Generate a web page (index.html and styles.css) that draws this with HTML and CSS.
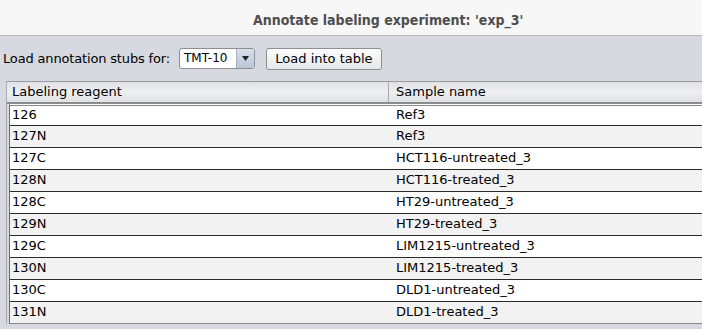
FILE: index.html
```html
<!DOCTYPE html>
<html>
<head>
<meta charset="utf-8">
<link rel="stylesheet" href="styles.css">
</head>
<body>
<div class="titlebar"><span class="title">Annotate labeling experiment: 'exp_3'</span></div>
<div class="content">
  <div class="toolbar">
    <span class="label">Load annotation stubs for:</span>
    <div class="combo"><span class="combo-text">TMT-10</span><span class="combo-arrow"><svg width="7" height="5" viewBox="0 0 7 5"><path d="M0 0H7L3.5 5Z" fill="#222"/></svg></span></div>
    <div class="button">Load into table</div>
  </div>
  <div class="pane">
    <div class="header">
      <div class="hcell c1">Labeling reagent</div>
      <div class="hcell c2">Sample name</div>
    </div>
    <div class="rows">
      <div class="row first"><div class="cell c1">126</div><div class="cell c2">Ref3</div></div>
      <div class="row alt"><div class="cell c1">127N</div><div class="cell c2">Ref3</div></div>
      <div class="row"><div class="cell c1">127C</div><div class="cell c2">HCT116-untreated_3</div></div>
      <div class="row alt"><div class="cell c1">128N</div><div class="cell c2">HCT116-treated_3</div></div>
      <div class="row"><div class="cell c1">128C</div><div class="cell c2">HT29-untreated_3</div></div>
      <div class="row alt"><div class="cell c1">129N</div><div class="cell c2">HT29-treated_3</div></div>
      <div class="row"><div class="cell c1">129C</div><div class="cell c2">LIM1215-untreated_3</div></div>
      <div class="row alt"><div class="cell c1">130N</div><div class="cell c2">LIM1215-treated_3</div></div>
      <div class="row"><div class="cell c1">130C</div><div class="cell c2">DLD1-untreated_3</div></div>
      <div class="row alt last"><div class="cell c1">131N</div><div class="cell c2">DLD1-treated_3</div></div>
    </div>
  </div>
</div>
</body>
</html>
```
FILE: styles.css
```css
html, body {
  margin: 0;
  padding: 0;
}
body {
  width: 702px;
  height: 329px;
  overflow: hidden;
  background: #d6d9df;
  font-family: "DejaVu Sans", sans-serif;
  font-size: 12px;
  color: #000;
}
.titlebar {
  height: 35px;
  background: #f7f7f7;
  border-bottom: 1px solid #b9b9b9;
  display: flex;
  align-items: center;
  padding-left: 253px;
  box-sizing: content-box;
}
.title {
  font-family: "DejaVu Sans Condensed", "DejaVu Sans", sans-serif;
  font-weight: bold;
  font-size: 14px;
  color: #4e4e4e;
  padding-top: 4px;
}
.content {
  padding: 0 0 0 6px;
}
.toolbar {
  height: 45px;
  display: flex;
  align-items: center;
  margin-left: -3px;
  box-sizing: border-box;
}
.label {
  font-size: 13px;
  letter-spacing: -0.16px;
  margin-right: 9px;
}
.combo {
  width: 76px;
  height: 21px;
  box-sizing: border-box;
  border: 1px solid #8e8f91;
  border-radius: 3px;
  background: #fff;
  display: flex;
  overflow: hidden;
  margin-right: 11px;
}
.combo-text {
  flex: 1;
  font-size: 12px;
  padding-left: 4px;
  line-height: 19px;
}
.combo-arrow {
  width: 17px;
  border-left: 1px solid #a8b2c0;
  background: linear-gradient(#d8e0ea, #b8c6d8);
  display: flex;
  align-items: center;
  justify-content: center;
}
.button {
  width: 116px;
  height: 22px;
  box-sizing: border-box;
  border: 1px solid #8e8f91;
  border-radius: 3px;
  background: linear-gradient(#fdfdfd, #e6e7e9);
  font-size: 13px;
  text-align: center;
  line-height: 20px;
}
.pane {
  border-left: 1px solid #a9abb0;
  border-top: 1px solid #9a9ca0;
  padding-left: 2px;
  width: 800px;
}
.header {
  display: flex;
  height: 20px;
  background: linear-gradient(#e1e2e6, #eeeff1 50%, #e0e1e5);
  border-bottom: 2px solid #8c8c8c;
  margin-left: -2px;
  padding-left: 2px;
}
.hcell {
  font-size: 13px;
  line-height: 20px;
  padding-left: 3px;
  box-sizing: border-box;
}
.hcell.c1 {
  width: 380px;
  border-right: 1px solid #a8a9ad;
}
.hcell.c2 {
  padding-left: 7px;
}
.rows {
  border-left: 1px solid #6b6b6b;
  border-top: 1px solid #fff;
  background: #fff;
}
.row {
  display: flex;
  height: 22px;
  box-sizing: border-box;
  border-bottom: 1px solid #2a2a2a;
  background: #fff;
}
.row.first {
  height: 21px;
  border-top: 1px solid #8a8a8a;
}
.row.first .cell {
  line-height: 17px;
}
.row.alt {
  background: #f2f2f2;
}
.row.last {
  border-bottom: 1px solid #8a8a8a;
}
.cell {
  font-size: 13px;
  line-height: 20px;
  padding-left: 2px;
  box-sizing: border-box;
}
.cell.c1 {
  width: 384px;
}
```
